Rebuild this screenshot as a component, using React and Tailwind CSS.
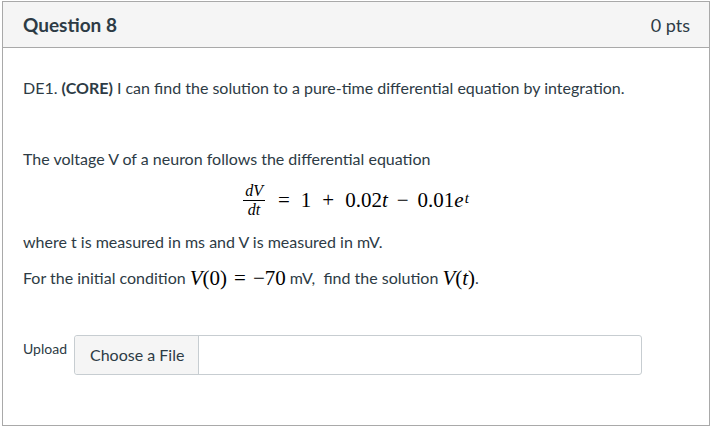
export default function App() {
  const mathFont = { fontFamily: '"Liberation Serif", "DejaVu Serif", serif' }

  return (
    <div className="pt-[1px] pl-[2px] bg-white min-h-screen">
      <div
        className="w-[708px] h-[425px] border border-[#a9a9a9] bg-white text-[#2d3b45]"
        style={{ fontFamily: 'Lato, "Open Sans", sans-serif' }}
      >
        <div className="h-[46px] bg-[#f5f5f5] border-b border-[#a9a9a9] flex items-center justify-between pl-[20px] pr-[19px]">
          <h2 className="text-[19px] font-bold leading-none">Question 8</h2>
          <span className="text-[18px] leading-none">0 pts</span>
        </div>

        <div className="px-[20px] text-[16px] leading-[24px]">
          <p className="mt-[28px]">
            DE1. <strong>(CORE)</strong> I can find the solution to a pure-time differential equation by integration.
          </p>

          <p className="mt-[47px]">The voltage V of a neuron follows the differential equation</p>

          {/* dV/dt = 1 + 0.02t − 0.01e^t */}
          <div className="mt-[7px] h-[44px] flex items-center justify-center text-[21px] text-black" style={mathFont}>
            <span className="inline-flex flex-col items-center text-[16px] leading-[18px] italic mr-[13px]">
              <span className="px-[2px]">dV</span>
              <span className="border-t border-black w-full text-center">dt</span>
            </span>
            <span className="mr-[11px]">=</span>
            <span className="mr-[11px]">1</span>
            <span className="mr-[11px]">+</span>
            <span className="mr-[9px]">
              0.02<i>t</i>
            </span>
            <span className="mr-[9px]">−</span>
            <span>
              0.01<i>e</i>
              <sup className="text-[15px] italic relative -top-[4px] ml-[1px]">t</sup>
            </span>
          </div>

          <p className="mt-[8px]">where t is measured in ms and V is measured in mV.</p>

          <p className="mt-[12px] h-[24px] flex items-center whitespace-pre">
            <span>For the initial condition </span>
            <span className="text-[21px] leading-none text-black" style={mathFont}>
              <i>V</i>(0)<span className="mx-[7px]">=</span>−70
            </span>
            <span> mV,  find the solution </span>
            <span className="text-[21px] leading-none text-black" style={mathFont}>
              <i>V</i>(<i>t</i>)
            </span>
            <span>.</span>
          </p>

          <div className="mt-[45px] flex items-start">
            <span className="text-[14px] leading-[20px] mt-[4px] w-[51px]">Upload</span>
            <div className="w-[568px] h-[40px] border border-[#c7cdd1] rounded-[3px] flex">
              <button className="h-full pl-[15px] pr-[14px] bg-[#f5f5f5] border-r border-[#c7cdd1] text-[16px] rounded-l-[3px]">
                Choose a File
              </button>
            </div>
          </div>
        </div>
      </div>
    </div>
  )
}
